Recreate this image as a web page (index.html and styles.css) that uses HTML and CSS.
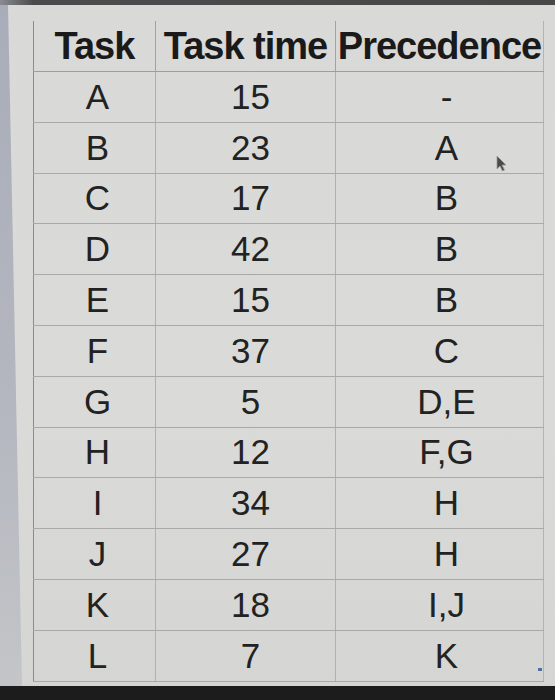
FILE: index.html
```html
<!DOCTYPE html>
<html>
<head>
<meta charset="utf-8">
<link rel="stylesheet" href="styles.css">
</head>
<body>
<div class="screen">
  <div class="topbar"></div>
  <div class="main">
    <div class="edge"></div>
    <div class="sheet">
      <table class="grid">
        <colgroup>
          <col class="c1"><col class="c2"><col class="c3">
        </colgroup>
        <thead>
          <tr><th>Task</th><th>Task time</th><th>Precedence</th></tr>
        </thead>
        <tbody>
          <tr><td class="t">A</td><td class="n">15</td><td class="p">-</td></tr>
          <tr><td class="t">B</td><td class="n">23</td><td class="p">A</td></tr>
          <tr><td class="t">C</td><td class="n">17</td><td class="p">B</td></tr>
          <tr><td class="t">D</td><td class="n">42</td><td class="p">B</td></tr>
          <tr><td class="t">E</td><td class="n">15</td><td class="p">B</td></tr>
          <tr><td class="t">F</td><td class="n">37</td><td class="p">C</td></tr>
          <tr><td class="t">G</td><td class="n">5</td><td class="p">D,E</td></tr>
          <tr><td class="t">H</td><td class="n">12</td><td class="p">F,G</td></tr>
          <tr><td class="t">I</td><td class="n">34</td><td class="p">H</td></tr>
          <tr><td class="t">J</td><td class="n">27</td><td class="p">H</td></tr>
          <tr><td class="t">K</td><td class="n">18</td><td class="p">I,J</td></tr>
          <tr><td class="t">L</td><td class="n">7</td><td class="p">K</td></tr>
        </tbody>
      </table>
      <svg class="cursor" width="11" height="17" viewBox="0 0 11 17">
        <path d="M1 1 L1 14 L4 11 L6.5 16 L8.5 15 L6 10 L10 10 Z" fill="#4a4a4a" stroke="#9a9a9a" stroke-width="0.8"/>
      </svg>
      <span class="mark"></span>
    </div>
  </div>
  <div class="bottombar"></div>
</div>
</body>
</html>
```
FILE: styles.css
```css
html, body {
  margin: 0;
  padding: 0;
}
body {
  width: 555px;
  height: 700px;
  overflow: hidden;
  background: #d7d7d5;
  font-family: "Liberation Sans", Arial, sans-serif;
}
.screen {
  display: flex;
  flex-direction: column;
  height: 700px;
}
.topbar {
  height: 5px;
  flex: none;
  background: linear-gradient(90deg, #8a8c92 0%, #4c4c4c 6%, #474747 100%);
}
.main {
  flex: 1;
  min-height: 0;
  overflow: hidden;
  display: flex;
  background: linear-gradient(180deg, #d9d9d7 0%, #dadad8 60%, #d5d5d3 100%);
}
.edge {
  width: 24px;
  flex: none;
  background: linear-gradient(180deg, #a9adb9 0%, #b4b7bf 60%, #c3c5c8 100%);
  clip-path: polygon(0 0, 8px 0, 22px 100%, 0 100%);
}
.sheet {
  position: relative;
  padding-top: 16px;
  padding-left: 9px;
}
.grid {
  border-collapse: collapse;
  table-layout: fixed;
  width: 510px;
  color: #1d1d1d;
}
.c1 { width: 122px; }
.c2 { width: 180px; }
.c3 { width: 208px; }
.grid th {
  height: 50px;
  padding: 0;
  font-weight: bold;
  font-size: 38px;
  letter-spacing: -1px;
  text-align: center;
  white-space: nowrap;
  border-left: 1px solid #a2a2a2;
  border-bottom: 1px solid #9e9e9e;
  color: #1a1a1a;
}
.grid td {
  height: 49.8px;
  padding: 0;
  font-size: 35px;
  text-align: center;
  border-left: 1px solid #b0b0b0;
  border-bottom: 1px solid #a9a9a9;
  color: #222;
}
.grid th:first-child,
.grid td:first-child {
  border-left: 1.5px solid #8c8c8c;
}
.grid th:last-child,
.grid td:last-child {
  border-right: 1px solid #b4b4b4;
}
.grid td.t { padding-left: 6px; }
.grid td.n { padding-left: 10px; }
.grid td.p { padding-left: 14px; }
.cursor {
  position: absolute;
  left: 472px;
  top: 150px;
}
.mark {
  position: absolute;
  left: 514px;
  top: 663px;
  width: 4px;
  height: 3px;
  background: #4f6fa0;
}
.bottombar {
  height: 14px;
  flex: none;
  background: #1c1c1c;
}
```
